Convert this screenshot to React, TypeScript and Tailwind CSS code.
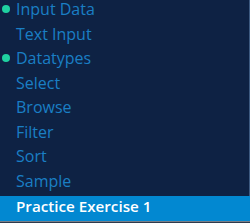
const items = [
  { label: "Input Data", dot: true },
  { label: "Text Input" },
  { label: "Datatypes", dot: true },
  { label: "Select" },
  { label: "Browse" },
  { label: "Filter" },
  { label: "Sort" },
  { label: "Sample" },
  { label: "Practice Exercise 1", active: true },
];

export default function App() {
  return (
    <div className="w-[250px] h-[223px] overflow-hidden bg-[#0e2244] flex flex-col font-['Open_Sans',sans-serif]">
      <ul className="flex flex-col border-r border-r-[#3d5a80]">
        {items.map((item) => (
          <li
            key={item.label}
            className={
              item.active
                ? "relative h-[24.5px] flex items-center pl-4 pb-[4px] leading-none bg-[#0288d1] text-white font-semibold text-[15.2px] -mr-px"
                : "relative h-[24.5px] flex items-center pl-4 pb-[6px] leading-none text-[#1a7fc4] text-[16px]"
            }
          >
            {item.dot && (
              <span className="absolute left-[2px] top-[5px] w-[8px] h-[8px] rounded-full bg-[#1fd1a1]" />
            )}
            {item.label}
          </li>
        ))}
      </ul>
      <div className="h-px bg-[#7a7f88]" />
      <div className="flex-1 bg-[#2d3a4d]" />
    </div>
  );
}
